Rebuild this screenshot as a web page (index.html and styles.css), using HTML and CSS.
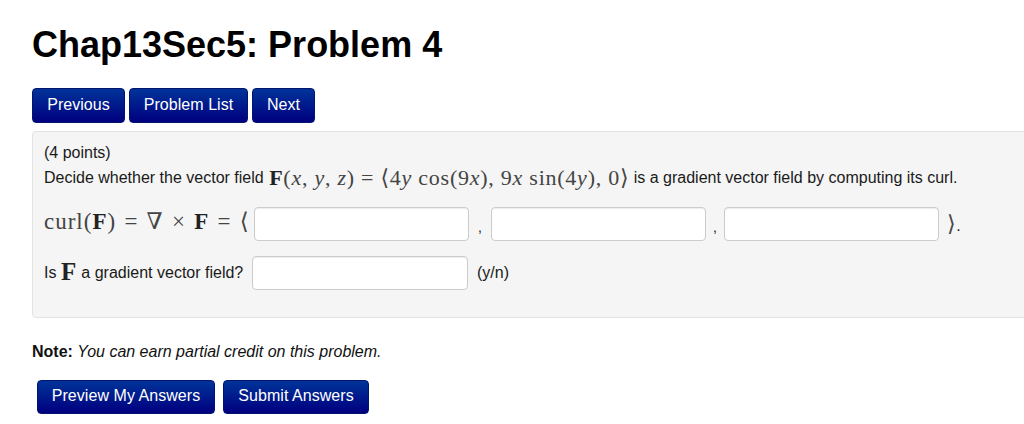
FILE: index.html
```html
<!DOCTYPE html>
<html lang="en">
<head>
<meta charset="utf-8">
<title>Chap13Sec5: Problem 4</title>
<link rel="stylesheet" href="styles.css">
</head>
<body>
<main class="page">
  <h1 class="title">Chap13Sec5: Problem 4</h1>
  <nav class="nav">
    <a class="btn btn-prev">Previous</a>
    <a class="btn btn-list">Problem List</a>
    <a class="btn btn-next">Next</a>
  </nav>
  <section class="panel">
    <p class="line points">(4 points)</p>
    <p class="line decide">Decide whether the vector field <span class="math m-field"><b>F</b>(<i>x</i>, <i>y</i>, <i>z</i>) = ⟨4<i>y</i> cos(9<i>x</i>), 9<i>x</i> sin(4<i>y</i>), 0⟩</span> is a gradient vector field by computing its curl.</p>
    <div class="curl">
      <span class="math m-curl">curl(<b>F</b>) = ∇ × <b>F</b> = ⟨</span>
      <input class="answer a1" type="text">
      <span class="comma c1">,</span>
      <input class="answer a2" type="text">
      <span class="comma c2">,</span>
      <input class="answer a3" type="text">
      <span class="close"><span class="math">⟩</span>.</span>
    </div>
    <div class="grad">
      <span class="grad-label">Is <b class="math m-f">F</b> a gradient vector field?</span>
      <input class="answer a4" type="text">
      <span class="yn">(y/n)</span>
    </div>
  </section>
  <p class="note"><b>Note:</b> <i>You can earn partial credit on this problem.</i></p>
  <div class="actions">
    <a class="btn btn-preview">Preview My Answers</a>
    <a class="btn btn-submit">Submit Answers</a>
  </div>
</main>
</body>
</html>
```
FILE: styles.css
```css
html, body {
  margin: 0;
  width: 1024px;
  height: 424px;
  overflow: hidden;
  background: #fff;
}
body {
  font-family: "Liberation Sans", Arial, sans-serif;
  font-size: 14px;
  color: #1a1a1a;
}
.page {
  display: flow-root;
  padding: 0 0 0 32px;
}
.title {
  margin: 25px 0 0;
  height: 40px;
  font-size: 36px;
  line-height: 40px;
  font-weight: 700;
  color: #000;
}
.nav {
  display: flex;
  margin-top: 23px;
}
.btn {
  box-sizing: border-box;
  height: 35px;
  padding-bottom: 2px;
  display: flex;
  align-items: center;
  justify-content: center;
  color: #fff;
  font-size: 16px;
  letter-spacing: 0.05px;
  border: 1px solid #00156b;
  border-radius: 4px;
  background: linear-gradient(#003399, #00007f);
}
.btn-prev { width: 93px; margin-right: 4px; }
.btn-list { width: 119px; margin-right: 4px; }
.btn-next { width: 63px; }
.panel {
  box-sizing: border-box;
  width: 1010px;
  height: 187px;
  margin-top: 8px;
  padding: 11px 11px 0;
  background: #f5f5f5;
  border: 1px solid #e3e3e3;
  border-radius: 4px;
}
.line {
  margin: 0;
  font-size: 16px;
  white-space: nowrap;
}
.points { height: 20px; line-height: 20px; }
.decide { height: 28px; line-height: 28px; margin-top: 1px; display: flex; align-items: center; white-space: pre; }
.math {
  font-family: "Liberation Serif", "DejaVu Serif", serif;
  font-size: 22px;
  color: #444;
  letter-spacing: 0.75px;
}
.math i { font-style: italic; }
.math b { color: #222; }
.m-field { white-space: nowrap; margin-left: 1px; }
.curl {
  display: flex;
  align-items: center;
  height: 34px;
  margin-top: 15px;
}
.m-curl {
  box-sizing: border-box;
  width: 210px;
  padding-bottom: 5px;
  font-size: 23px;
  letter-spacing: 1px;
  word-spacing: 1.5px;
  white-space: nowrap;
}
.answer {
  box-sizing: border-box;
  height: 34px;
  margin: 0;
  padding: 0 12px;
  background: #fff;
  border: 1px solid #ccc;
  border-radius: 4px;
  box-shadow: inset 0 1px 1px rgba(0, 0, 0, .075);
}
.a1, .a2, .a3 { width: 215px; }
.comma { padding-top: 6px; text-align: center; font-size: 14px; color: #1a1a1a; }
.c1 { width: 22px; }
.c2 { width: 18px; }
.close { margin-left: 8px; font-size: 16px; white-space: nowrap; }
.grad {
  display: flex;
  align-items: center;
  height: 34px;
  margin-top: 15px;
  font-size: 16px;
}
.grad-label { width: 208px; white-space: nowrap; }
.m-f { font-size: 25px; line-height: 0; vertical-align: -2px; color: #222; }
.a4 { width: 216px; }
.yn { margin-left: 9px; }
.note {
  margin: 24px 0 0;
  height: 20px;
  line-height: 20px;
  font-size: 16px;
  color: #111;
}
.actions {
  display: flex;
  margin: 18px 0 0 5px;
}
.actions .btn { height: 34px; }
.btn-preview { width: 178px; margin-right: 8px; }
.btn-submit { width: 146px; }
```
